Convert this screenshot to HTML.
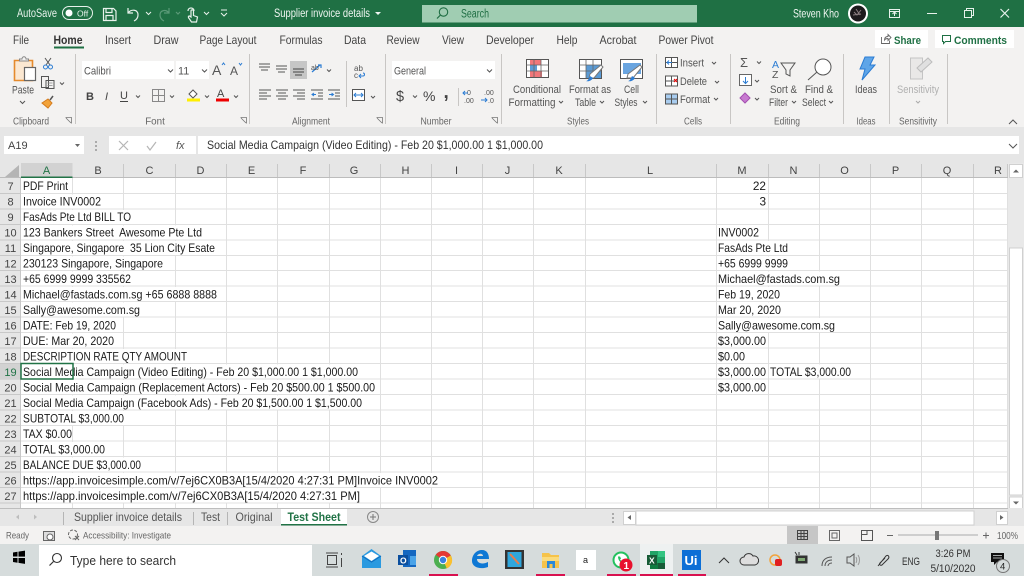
<!DOCTYPE html>
<html><head><meta charset="utf-8"><title>Supplier invoice details - Excel</title>
<style>
html,body{margin:0;padding:0;width:1024px;height:576px;overflow:hidden;background:#fff}
svg{display:block;filter:blur(.3px)}
text{font-family:"Liberation Sans",sans-serif;white-space:pre}
.c{font-size:11.8px;fill:#1a1a1a}
.r{font-size:11px;fill:#444;text-anchor:middle}
.h{font-size:11px;fill:#444;text-anchor:middle}
.rb{font-size:10.8px;fill:#555}
.rm{font-size:10.8px;fill:#555;text-anchor:middle}
.tab{font-size:11.6px;fill:#444;text-anchor:middle}
.lb{font-size:9.8px;fill:#666;text-anchor:middle}
.chev{fill:none;stroke:#555;stroke-width:1}
.ln{fill:none;stroke:#666;stroke-width:1}
</style></head><body>
<svg width="1024" height="576" viewBox="0 0 1024 576" xmlns="http://www.w3.org/2000/svg">
<!-- Title bar -->
<rect width="1024" height="27" fill="#1f7044"/>
<text x="17" y="17" font-size="11.500" fill="#e8f2ec" textLength="40" lengthAdjust="spacingAndGlyphs">AutoSave</text>
<rect x="62.500" y="6.500" width="30" height="13" rx="6.500" fill="none" stroke="#e8f2ec"/>
<circle cx="69" cy="13" r="3.500" fill="#fff"/>
<text x="77" y="16.500" font-size="8.500" fill="#e8f2ec">Off</text>
<g fill="none" stroke="#e8f2ec" stroke-width="1.200">
<path d="M103.500 8.500h10l2.500 2.500v9.500h-12.500z M106 8.500v4h6v-4 M106 20.500v-5h7v5"/>
<path d="M128 8v5h5 M128 13c3-4 10-4 10 2c0 3-2 5-4 6"/>
<path d="M146 12l2.500 2.500l2.500-2.500" stroke-width="1"/>
<path d="M169 8v5h-5 M169 13c-3-4-9-3-9 2c0 3 2 5 4 6 M176 12l2 2l2-2" stroke="#5b9a78"/>
<path d="M191 11v6l-1.500-1c-2 0-1 2 0 3l2 3h5l1-5l-4-1.500v-4.500c0-1.500-2.500-1.500-2.500 0z M188 11c0-4 6-4 6 0"/>
<path d="M204 12l2.500 2.500l2.500-2.500" stroke-width="1"/>
<path d="M221 10h6 M221 13l3 3l3-3" stroke-width="1"/>
</g>
<text x="274" y="17" font-size="11.500" fill="#f0f6f2" textLength="96" lengthAdjust="spacingAndGlyphs">Supplier invoice details</text>
<path d="M375 12h6l-3 3z" fill="#f0f6f2"/>
<rect x="422" y="5" width="275" height="17.500" fill="#a0cdb2"/>
<circle cx="443.500" cy="12" r="4.200" fill="none" stroke="#1f6e43" stroke-width="1.100"/>
<path d="M440.500 15l-3.500 3.500" stroke="#1f6e43" stroke-width="1.200"/>
<text x="461" y="17.500" font-size="11.500" fill="#1f6e43" textLength="28" lengthAdjust="spacingAndGlyphs">Search</text>
<text x="793" y="17.500" font-size="11.500" fill="#f0f6f2" textLength="46" lengthAdjust="spacingAndGlyphs">Steven Kho</text>
<circle cx="858" cy="13.500" r="10" fill="#fff"/><circle cx="858" cy="13.500" r="8" fill="#1c1a1c"/>
<path d="M854 12l3 3l4-5 M856 9l4 6 M853 15l8-1" stroke="#8a7d80" stroke-width="1" fill="none"/>
<g fill="none" stroke="#e8f2ec" stroke-width="1">
<path d="M889.500 9.500h10v8h-10z M889.500 11.500h10 M894.500 16v-3.500 M892.500 14l2-2l2 2"/>
<path d="M927 13.500h10"/>
<path d="M964.500 10.500h7v7h-7z M966.500 10.500v-2h7v7h-2"/>
<path d="M1000.500 9l8.500 8.500 M1009 9l-8.500 8.500" stroke-width="1.200"/>
</g>
<!-- Ribbon -->
<rect y="27" width="1024" height="100" fill="#f3f2f1"/>
<text class="tab" x="21" y="44" textLength="16" lengthAdjust="spacingAndGlyphs">File</text>
<text class="tab" x="68" y="44" font-weight="bold" style="fill:#333" textLength="29" lengthAdjust="spacingAndGlyphs">Home</text>
<rect x="54" y="46.500" width="30" height="2" fill="#1f7044"/>
<text class="tab" x="118" y="44" textLength="26" lengthAdjust="spacingAndGlyphs">Insert</text>
<text class="tab" x="166" y="44" textLength="25" lengthAdjust="spacingAndGlyphs">Draw</text>
<text class="tab" x="228" y="44" textLength="57" lengthAdjust="spacingAndGlyphs">Page Layout</text>
<text class="tab" x="301" y="44" textLength="43" lengthAdjust="spacingAndGlyphs">Formulas</text>
<text class="tab" x="355" y="44" textLength="22" lengthAdjust="spacingAndGlyphs">Data</text>
<text class="tab" x="403" y="44" textLength="33" lengthAdjust="spacingAndGlyphs">Review</text>
<text class="tab" x="453" y="44" textLength="22" lengthAdjust="spacingAndGlyphs">View</text>
<text class="tab" x="510" y="44" textLength="48" lengthAdjust="spacingAndGlyphs">Developer</text>
<text class="tab" x="567" y="44" textLength="21" lengthAdjust="spacingAndGlyphs">Help</text>
<text class="tab" x="618" y="44" textLength="37" lengthAdjust="spacingAndGlyphs">Acrobat</text>
<text class="tab" x="686" y="44" textLength="55" lengthAdjust="spacingAndGlyphs">Power Pivot</text>
<rect x="875" y="30" width="53" height="18" fill="#fff"/>
<path d="M881.500 37v6.500h8v-3 M884.500 40c0-2.500 1.500-3.500 3.500-3.500v-2l3 3l-3 3v-2c-1.500 0-2.500 0-3.500 1.500z" fill="none" stroke="#666" stroke-width=".9"/>
<text x="894" y="44" font-size="11" font-weight="bold" fill="#1f7044" textLength="27" lengthAdjust="spacingAndGlyphs">Share</text>
<rect x="935" y="30" width="79" height="18" fill="#fff"/>
<path d="M942.500 35.500h8v6h-5l-2 2v-2h-1z" fill="none" stroke="#1f7044"/>
<text x="954" y="44" font-size="11" font-weight="bold" fill="#1f7044" textLength="53" lengthAdjust="spacingAndGlyphs">Comments</text>
<!-- Group separators -->
<g stroke="#c8c6c4"><path d="M75.500 54v70 M249.500 54v70 M385.500 54v70 M501.500 54v70 M656.500 54v70 M730.500 54v70 M843.500 54v70 M889.500 54v70 M947.500 54v70"/><path d="M346.500 61v46 M458.500 88v18"/></g>
<!-- group labels -->
<text class="lb" x="31" y="124.500" textLength="36" lengthAdjust="spacingAndGlyphs">Clipboard</text>
<text class="lb" x="155" y="124.500">Font</text>
<text class="lb" x="311" y="124.500" textLength="38" lengthAdjust="spacingAndGlyphs">Alignment</text>
<text class="lb" x="436" y="124.500" textLength="31" lengthAdjust="spacingAndGlyphs">Number</text>
<text class="lb" x="578" y="124.500" textLength="22" lengthAdjust="spacingAndGlyphs">Styles</text>
<text class="lb" x="693" y="124.500" textLength="18" lengthAdjust="spacingAndGlyphs">Cells</text>
<text class="lb" x="787" y="124.500" textLength="26" lengthAdjust="spacingAndGlyphs">Editing</text>
<text class="lb" x="866" y="124.500" textLength="19" lengthAdjust="spacingAndGlyphs">Ideas</text>
<text class="lb" x="918" y="124.500" textLength="38" lengthAdjust="spacingAndGlyphs">Sensitivity</text>
<g fill="none" stroke="#777" stroke-width=".8"><path d="M65.500 117.500h6v6 M66 118l5 5"/><path d="M240.500 117.500h6v6 M241 118l5 5"/><path d="M376.500 117.500h6v6 M377 118l5 5"/><path d="M491.500 117.500h6v6 M492 118l5 5"/></g>
<path class="chev" d="M1009 124l4-4l4 4"/>
<!-- Clipboard -->
<path d="M14.500 60.500h18v20h-18z" fill="#fbe8d2" stroke="#e58a2c" stroke-width="1.600"/>
<path d="M19.500 61v-2h2.500c0-3 4-3 4 0h2.500v2z" fill="#f3f2f1" stroke="#888"/>
<rect x="24.500" y="67.500" width="11" height="13" fill="#fff" stroke="#666" stroke-width="1.200"/>
<text class="rm" x="23" y="93.500" textLength="22" lengthAdjust="spacingAndGlyphs">Paste</text>
<path class="chev" d="M20 101l2.500 2.500l2.500-2.500"/>
<path d="M45 58l5 7 M51 58l-5 7" stroke="#555" fill="none"/>
<circle cx="45.500" cy="67" r="2" fill="none" stroke="#2b7cd3"/><circle cx="50.500" cy="67" r="2" fill="none" stroke="#2b7cd3"/>
<path d="M41.500 76.500h7v11h-7z M46 80.500h8v8h-8z" fill="#f3f2f1" stroke="#555"/>
<path d="M47.500 83h5 M47.500 85.500h5" stroke="#888" stroke-width=".7"/>
<path class="chev" d="M60 82.500l2 2l2-2"/>
<path d="M42 103l6-4l4 4l-4 5z" fill="#f2a33a" stroke="#d47b1c"/>
<path d="M50 100l3-4" stroke="#555" stroke-width="1.500"/>
<!-- Font -->
<rect x="82" y="61" width="92" height="18" fill="#fff"/>
<rect x="176" y="61" width="33" height="18" fill="#fff"/>
<text class="rb" x="84" y="74.500" textLength="27" lengthAdjust="spacingAndGlyphs">Calibri</text>
<text class="rb" x="178" y="74.500">11</text>
<path class="chev" d="M168 69.500l2.500 2.500l2.500-2.500 M202 69.500l2.500 2.500l2.500-2.500"/>
<text x="212" y="75" font-size="14" fill="#555">A</text>
<text x="230" y="75" font-size="12" fill="#555">A</text>
<path d="M222 65l1.500-2l1.500 2" fill="none" stroke="#2b7cd3"/><path d="M239 63l1.500 2l1.500-2" fill="none" stroke="#2b7cd3"/>
<text x="86" y="100" font-size="11" font-weight="bold" fill="#444">B</text>
<text x="105" y="100" font-size="11" font-style="italic" fill="#444" font-family="Liberation Serif">I</text>
<text x="120" y="99" font-size="11" fill="#444">U</text><path d="M120 101.500h8" stroke="#444"/>
<path class="chev" d="M136 95.500l2 2l2-2 M170 95.500l2 2l2-2 M205 95.500l2 2l2-2 M234 95.500l2 2l2-2"/>
<path d="M152.500 89.500h12v12h-12z M158.500 89.500v12 M152.500 95.500h12" fill="none" stroke="#888"/>
<path d="M189 94l4-4l4 4l-4 4z" fill="#fff" stroke="#555"/><rect x="187" y="98.500" width="13" height="3" fill="#ffef00"/>
<text x="217" y="97" font-size="11" fill="#444">A</text><rect x="216" y="98.500" width="13" height="3" fill="#e00"/>
<!-- Alignment -->
<g stroke="#555" fill="none"><path d="M259 64h11 M259 67h11 M261 70h7"/><path d="M276 66h11 M276 69h11 M278 72h7"/></g>
<rect x="290" y="61" width="17" height="18" fill="#c6c6c6"/>
<path d="M293 69h11 M293 72h11 M295 75h7" stroke="#444" fill="none"/>
<path d="M312 72l8-7 M318 65h3v3" stroke="#2b7cd3" fill="none" stroke-width="1.200"/><text x="311" y="70" font-size="7" fill="#555">ab</text>
<path class="chev" d="M327 69.500l2 2l2-2 M371 96l2 2l2-2"/>
<text x="354" y="71" font-size="8" fill="#555">ab</text><text x="354" y="78" font-size="8" fill="#555">c</text>
<path d="M359 76h4c2 0 2-3 0-3 M361 74l-2 2l2 2" stroke="#2b7cd3" fill="none"/>
<g stroke="#555" fill="none"><path d="M259 90h12 M259 93h8 M259 96h12 M259 99h8"/><path d="M276 90h12 M278 93h8 M276 96h12 M278 99h8"/><path d="M293 90h12 M297 93h8 M293 96h12 M297 99h8"/><path d="M311 90h12 M318 93h5 M318 96h5 M311 99h12"/><path d="M328 90h12 M335 93h5 M335 96h5 M328 99h12"/></g>
<path d="M316 94.500h-4 M314 93l-2 1.500l2 1.500 M329 94.500h4 M331.500 93l2 1.500l-2 1.500" stroke="#2b7cd3" fill="none"/>
<rect x="352.500" y="89.500" width="12" height="11" fill="#fff" stroke="#555"/><path d="M354 95h9 M356 93l-2 2l2 2 M361 93l2 2l-2 2" stroke="#2b7cd3" fill="none"/>
<!-- Number -->
<rect x="392" y="61" width="103" height="18" fill="#fff"/>
<text class="rb" x="394" y="74.500" textLength="32" lengthAdjust="spacingAndGlyphs">General</text>
<path class="chev" d="M487 69.500l2.500 2.500l2.500-2.500 M413 95.500l2 2l2-2"/>
<text x="396" y="101" font-size="14.500" fill="#444">$</text>
<text x="423" y="101" font-size="14" fill="#444">%</text>
<text x="443.500" y="98" font-size="19" font-weight="bold" fill="#444">,</text>
<text x="467" y="95" font-size="7" fill="#555">0</text><text x="464" y="103" font-size="7" fill="#555">.00</text>
<path d="M468 93h-5 M465 91l-2 2l2 2" stroke="#2b7cd3" fill="none"/>
<text x="484" y="95" font-size="7" fill="#555">.00</text><text x="488" y="103" font-size="7" fill="#555">.0</text>
<path d="M481 100h6 M485 98l2 2l-2 2" stroke="#2b7cd3" fill="none"/>
<!-- Styles -->
<rect x="526.500" y="59.500" width="22" height="18" fill="#fff" stroke="#555"/>
<path d="M530 60h11v5h-11z M530 71h12v6h-12z" fill="#f1777a"/><rect x="530" y="65" width="7" height="6" fill="#5b9bd5"/>
<path d="M526.500 65h22 M526.500 71h22 M534 59.500v18 M541 59.500v18" stroke="#666" stroke-width=".8" fill="none"/>
<text class="rm" x="537" y="93" textLength="48" lengthAdjust="spacingAndGlyphs">Conditional</text>
<text class="rm" x="532" y="106" textLength="47" lengthAdjust="spacingAndGlyphs">Formatting</text>
<path class="chev" d="M559 101l2 2l2-2"/>
<rect x="579.500" y="59.500" width="22" height="19" fill="#fff" stroke="#555"/>
<rect x="586" y="65" width="15" height="13" fill="#5b9bd5"/>
<path d="M579.500 65h22 M579.500 71h22 M586 59.500v19 M593 59.500v19" stroke="#666" stroke-width=".8" fill="none"/>
<path d="M589 78l1-4l11-9l2 2l-9 11z" fill="#fff" stroke="#777"/><path d="M586 81c2 0 3-3 4-5l3 2c-1 2-4 4-7 3z" fill="#2b7cd3"/>
<text class="rm" x="590" y="93" textLength="42" lengthAdjust="spacingAndGlyphs">Format as</text>
<text class="rm" x="585.500" y="106" textLength="21" lengthAdjust="spacingAndGlyphs">Table</text>
<path class="chev" d="M600 101l2 2l2-2"/>
<rect x="620.500" y="59.500" width="22" height="19" fill="#fff" stroke="#555"/>
<rect x="623" y="63" width="18" height="11" fill="#6aa5e0"/>
<path d="M627 78l1-4l12-9l2 2l-9 11z" fill="#fff" stroke="#777"/><path d="M628 81c2 0 3-3 4-5l3 2c-1 2-4 4-7 3z" fill="#2b7cd3"/>
<text class="rm" x="631.500" y="93" textLength="15" lengthAdjust="spacingAndGlyphs">Cell</text>
<text class="rm" x="626" y="106" textLength="23" lengthAdjust="spacingAndGlyphs">Styles</text>
<path class="chev" d="M643 101l2 2l2-2"/>
<!-- Cells -->
<path d="M665.500 57.500h12v10h-12z M665.500 62.500h12 M671.500 57.500v10" fill="#fff" stroke="#555"/><path d="M667 62.500h5 M669 60.500l-2 2l2 2" stroke="#2b7cd3" fill="none"/>
<text class="rb" x="680" y="66.500" textLength="24" lengthAdjust="spacingAndGlyphs">Insert</text>
<path d="M665.500 76h12v10h-12z M665.500 81h12 M671.500 76v10" fill="#fff" stroke="#555"/><path d="M674 79l3 3 M677 79l-3 3" stroke="#e00" fill="none"/>
<text class="rb" x="680" y="85" textLength="27" lengthAdjust="spacingAndGlyphs">Delete</text>
<path d="M665.500 94h12v10h-12z" fill="#a9cdf0" stroke="#555"/><path d="M665.500 99h12 M671.500 94v10" stroke="#555" fill="none"/>
<text class="rb" x="680" y="103" textLength="30" lengthAdjust="spacingAndGlyphs">Format</text>
<path class="chev" d="M712 62l2 2l2-2 M715 81l2 2l2-2 M714 98l2 2l2-2"/>
<!-- Editing -->
<text x="740" y="67" font-size="13" fill="#555">Σ</text>
<path class="chev" d="M757 61.500l2 2l2-2 M755 80l2 2l2-2 M755 98l2 2l2-2"/>
<rect x="739.500" y="74.500" width="12" height="11" fill="#fff" stroke="#666"/><path d="M745.500 77v6 M743 81l2.500 2.500l2.500-2.500" stroke="#2b7cd3" fill="none"/>
<path d="M740 98l5-5l5 5l-5 5z" fill="#c77ad0" stroke="#a34fb0"/>
<text x="772" y="68" font-size="10.500" fill="#2b7cd3">A</text><text x="772" y="78" font-size="10.500" fill="#555">Z</text>
<path d="M781 63h14l-5 7v6l-4-2v-4z" fill="none" stroke="#555"/>
<text class="rm" x="783.500" y="93" textLength="27" lengthAdjust="spacingAndGlyphs">Sort &amp;</text>
<text class="rm" x="778.500" y="106" textLength="19" lengthAdjust="spacingAndGlyphs">Filter</text>
<path class="chev" d="M792 101l2 2l2-2"/>
<circle cx="823" cy="67" r="8" fill="#fff" stroke="#555"/><path d="M817 72l-9 8" stroke="#555" fill="none"/>
<text class="rm" x="819" y="93" textLength="28" lengthAdjust="spacingAndGlyphs">Find &amp;</text>
<text class="rm" x="814" y="106" textLength="24" lengthAdjust="spacingAndGlyphs">Select</text>
<path class="chev" d="M829 101l2 2l2-2"/>
<!-- Ideas -->
<path d="M865 57h9l-4 8h5l-13 15l3-11h-5z" fill="#5ea5e8" stroke="#2b7cd3"/>
<text class="rm" x="866" y="93" textLength="22" lengthAdjust="spacingAndGlyphs">Ideas</text>
<!-- Sensitivity -->
<path d="M910.500 58h12v21h-12z" fill="#e9e8e7" stroke="#c4c4c4"/>
<path d="M917 68l11-10l4 4l-11 10z" fill="#e0e0e0" stroke="#bdbdbd"/>
<text class="rm" x="918" y="93" textLength="42" lengthAdjust="spacingAndGlyphs" style="fill:#b0b0b0">Sensitivity</text>
<path d="M916 101l2 2l2-2" fill="none" stroke="#aaa"/>
<!-- Formula bar -->
<rect y="127" width="1024" height="36" fill="#e6e6e6"/>
<rect x="4" y="136" width="80" height="18" fill="#fff"/>
<text x="8" y="149" font-size="11" fill="#444">A19</text>
<path d="M75 144h5l-2.500 3z" fill="#666"/>
<g fill="#aaa"><rect x="95" y="141" width="2" height="2"/><rect x="95" y="145" width="2" height="2"/><rect x="95" y="149" width="2" height="2"/></g>
<rect x="109" y="136" width="87" height="18" fill="#fff"/>
<path d="M119 141l9 9 M128 141l-9 9 M147 146l3 4l6-8" stroke="#b5b5b5" fill="none" stroke-width="1.200"/>
<text x="176" y="149" font-size="11" font-style="italic" font-family="Liberation Serif" fill="#555">fx</text>
<rect x="198" y="136" width="821" height="18" fill="#fff"/>
<text x="207" y="149" font-size="11.800" fill="#333" textLength="336" lengthAdjust="spacingAndGlyphs">Social Media Campaign (Video Editing) - Feb 20 $1,000.00 1 $1,000.00</text>
<path class="chev" d="M1009 144l4 4l4-4"/>
<!-- Grid -->
<rect x="0" y="163" width="1024" height="345" fill="#fff"/>
<rect x="0" y="163" width="1008" height="15" fill="#e6e6e6"/>
<rect x="0" y="178" width="21" height="330" fill="#e6e6e6"/>
<path d="M20 165v12h-14z" fill="#b5b5b5" transform="translate(-1 0)"/>
<g stroke="#e0e0e0" fill="none">
<path d="M72.500 178v330 M123.500 178v330 M175.500 178v330 M226.500 178v330 M277.500 178v330 M329.500 178v330 M380.500 178v330 M431.500 178v330 M482.500 178v330 M533.500 178v330 M585.500 178v330 M716.500 178v330 M768.500 178v330 M819.500 178v330 M870.500 178v330 M921.500 178v330 M973.500 178v330 M1007.500 178v330"/>
<path d="M21 193.500h987 M21 209h987 M21 224.500h987 M21 240h987 M21 255.500h987 M21 270.500h987 M21 286h987 M21 301.500h987 M21 317h987 M21 332.500h987 M21 348h987 M21 363.500h987 M21 379h987 M21 394.500h987 M21 410h987 M21 425.500h987 M21 441h987 M21 456.500h987 M21 472h987 M21 487.500h987 M21 503h987"/>
</g>
<g stroke="#c8c8c8" fill="none"><path d="M123.500 164v14 M175.500 164v14 M226.500 164v14 M277.500 164v14 M329.500 164v14 M380.500 164v14 M431.500 164v14 M482.500 164v14 M533.500 164v14 M585.500 164v14 M716.500 164v14 M768.500 164v14 M819.500 164v14 M870.500 164v14 M921.500 164v14 M973.500 164v14 M1007.500 164v14"/>
<path d="M20.500 178v330 M0 193.500h21 M0 209h21 M0 224.500h21 M0 240h21 M0 255.500h21 M0 270.500h21 M0 286h21 M0 301.500h21 M0 317h21 M0 332.500h21 M0 348h21 M0 363.500h21 M0 379h21 M0 394.500h21 M0 410h21 M0 425.500h21 M0 441h21 M0 456.500h21 M0 472h21 M0 487.500h21 M0 503h21"/></g>
<rect x="21" y="163" width="51.500" height="14" fill="#d2d2d2"/>
<path d="M0 178h1008" stroke="#bcbcbc" fill="none" transform="translate(0 -.5)"/>
<rect x="21" y="176.500" width="51.500" height="1.500" fill="#217346"/>
<rect x="0" y="364" width="20" height="15" fill="#d2d2d2"/>
<!-- White masks for overflow -->
<g fill="#fff">
<rect x="22" y="194.500" width="100.500" height="14"/><rect x="22" y="210" width="152" height="14"/><rect x="22" y="225.500" width="203" height="14"/><rect x="22" y="241" width="203" height="14"/><rect x="22" y="256.500" width="152" height="13.500"/><rect x="22" y="271.500" width="152" height="14"/><rect x="22" y="287" width="203" height="14"/><rect x="22" y="302.500" width="152" height="14"/><rect x="22" y="318" width="100.500" height="14"/><rect x="22" y="333.500" width="100.500" height="14"/><rect x="22" y="349" width="203" height="14"/><rect x="22" y="364.500" width="357" height="14"/><rect x="22" y="380" width="357" height="14"/><rect x="22" y="395.500" width="357" height="14"/><rect x="22" y="411" width="152" height="14"/><rect x="22" y="442" width="100.500" height="14"/><rect x="22" y="457.500" width="152" height="14"/><rect x="22" y="473" width="459" height="14"/><rect x="22" y="488.500" width="357" height="14"/>
<rect x="717" y="241" width="101" height="14"/><rect x="717" y="256.500" width="101" height="13.500"/><rect x="717" y="271.500" width="152" height="14"/><rect x="717" y="287" width="101" height="14"/><rect x="717" y="302.500" width="101" height="14"/><rect x="717" y="318" width="152" height="14"/><rect x="769" y="364.500" width="100" height="14"/>
</g>
<!-- Column headers -->
<text class="h" x="46.500" y="174" style="fill:#217346">A</text>
<text class="h" x="98" y="174">B</text><text class="h" x="149.500" y="174">C</text><text class="h" x="200.500" y="174">D</text><text class="h" x="251.500" y="174">E</text><text class="h" x="303" y="174">F</text><text class="h" x="354" y="174">G</text><text class="h" x="405.500" y="174">H</text><text class="h" x="456.500" y="174">I</text><text class="h" x="507.500" y="174">J</text><text class="h" x="559" y="174">K</text><text class="h" x="650" y="174">L</text><text class="h" x="742" y="174">M</text><text class="h" x="793.500" y="174">N</text><text class="h" x="844.500" y="174">O</text><text class="h" x="895.500" y="174">P</text><text class="h" x="947" y="174">Q</text><text class="h" x="998" y="174">R</text>
<!-- Row headers -->
<text class="r" x="10.500" y="190">7</text><text class="r" x="10.500" y="205.500">8</text><text class="r" x="10.500" y="221">9</text><text class="r" x="10.500" y="236.500">10</text><text class="r" x="10.500" y="252">11</text><text class="r" x="10.500" y="267.500">12</text><text class="r" x="10.500" y="283">13</text><text class="r" x="10.500" y="298.500">14</text><text class="r" x="10.500" y="314">15</text><text class="r" x="10.500" y="329.500">16</text><text class="r" x="10.500" y="345">17</text><text class="r" x="10.500" y="360.500">18</text><text class="r" x="10.500" y="376" style="fill:#217346">19</text><text class="r" x="10.500" y="391.500">20</text><text class="r" x="10.500" y="407">21</text><text class="r" x="10.500" y="422.500">22</text><text class="r" x="10.500" y="438">23</text><text class="r" x="10.500" y="453.500">24</text><text class="r" x="10.500" y="469">25</text><text class="r" x="10.500" y="484.500">26</text><text class="r" x="10.500" y="500">27</text>
<!-- Cell text col A -->
<text class="c" x="23" y="190" textLength="45" lengthAdjust="spacingAndGlyphs">PDF Print</text>
<text class="c" x="23" y="205.500" textLength="78" lengthAdjust="spacingAndGlyphs">Invoice INV0002</text>
<text class="c" x="23" y="221" textLength="108" lengthAdjust="spacingAndGlyphs">FasAds Pte Ltd BILL TO</text>
<text class="c" x="23" y="236.500" textLength="179" lengthAdjust="spacingAndGlyphs">123 Bankers Street  Awesome Pte Ltd</text>
<text class="c" x="23" y="252" textLength="192" lengthAdjust="spacingAndGlyphs">Singapore, Singapore  35 Lion City Esate</text>
<text class="c" x="23" y="267.500" textLength="140" lengthAdjust="spacingAndGlyphs">230123 Singapore, Singapore</text>
<text class="c" x="23" y="283" textLength="108" lengthAdjust="spacingAndGlyphs">+65 6999 9999 335562</text>
<text class="c" x="23" y="298.500" textLength="194" lengthAdjust="spacingAndGlyphs">Michael@fastads.com.sg +65 6888 8888</text>
<text class="c" x="23" y="314" textLength="117" lengthAdjust="spacingAndGlyphs">Sally@awesome.com.sg</text>
<text class="c" x="23" y="329.500" textLength="93" lengthAdjust="spacingAndGlyphs">DATE: Feb 19, 2020</text>
<text class="c" x="23" y="345" textLength="91" lengthAdjust="spacingAndGlyphs">DUE: Mar 20, 2020</text>
<text class="c" x="23" y="360.500" textLength="164" lengthAdjust="spacingAndGlyphs">DESCRIPTION RATE QTY AMOUNT</text>
<text class="c" x="23" y="376" textLength="335" lengthAdjust="spacingAndGlyphs">Social Media Campaign (Video Editing) - Feb 20 $1,000.00 1 $1,000.00</text>
<text class="c" x="23" y="391.500" textLength="352" lengthAdjust="spacingAndGlyphs">Social Media Campaign (Replacement Actors) - Feb 20 $500.00 1 $500.00</text>
<text class="c" x="23" y="407" textLength="339" lengthAdjust="spacingAndGlyphs">Social Media Campaign (Facebook Ads) - Feb 20 $1,500.00 1 $1,500.00</text>
<text class="c" x="23" y="422.500" textLength="101" lengthAdjust="spacingAndGlyphs">SUBTOTAL $3,000.00</text>
<text class="c" x="23" y="438" textLength="49" lengthAdjust="spacingAndGlyphs">TAX $0.00</text>
<text class="c" x="23" y="453.500" textLength="82" lengthAdjust="spacingAndGlyphs">TOTAL $3,000.00</text>
<text class="c" x="23" y="469" textLength="118" lengthAdjust="spacingAndGlyphs">BALANCE DUE $3,000.00</text>
<text class="c" x="23" y="484.500" textLength="415" lengthAdjust="spacingAndGlyphs">https://app.invoicesimple.com/v/7ej6CX0B3A[15/4/2020 4:27:31 PM]Invoice INV0002</text>
<text class="c" x="23" y="500" textLength="337" lengthAdjust="spacingAndGlyphs">https://app.invoicesimple.com/v/7ej6CX0B3A[15/4/2020 4:27:31 PM]</text>
<!-- col M -->
<text class="c" x="766" y="190" text-anchor="end">22</text>
<text class="c" x="766" y="205.500" text-anchor="end">3</text>
<text class="c" x="718" y="236.500" textLength="41" lengthAdjust="spacingAndGlyphs">INV0002</text>
<text class="c" x="718" y="252" textLength="70" lengthAdjust="spacingAndGlyphs">FasAds Pte Ltd</text>
<text class="c" x="718" y="267.500" textLength="70" lengthAdjust="spacingAndGlyphs">+65 6999 9999</text>
<text class="c" x="718" y="283" textLength="122" lengthAdjust="spacingAndGlyphs">Michael@fastads.com.sg</text>
<text class="c" x="718" y="298.500" textLength="62" lengthAdjust="spacingAndGlyphs">Feb 19, 2020</text>
<text class="c" x="718" y="314" textLength="63" lengthAdjust="spacingAndGlyphs">Mar 20, 2020</text>
<text class="c" x="718" y="329.500" textLength="117" lengthAdjust="spacingAndGlyphs">Sally@awesome.com.sg</text>
<text class="c" x="718" y="345" textLength="48" lengthAdjust="spacingAndGlyphs">$3,000.00</text>
<text class="c" x="718" y="360.500" textLength="27" lengthAdjust="spacingAndGlyphs">$0.00</text>
<text class="c" x="718" y="376" textLength="48" lengthAdjust="spacingAndGlyphs">$3,000.00</text>
<text class="c" x="770" y="376" textLength="81" lengthAdjust="spacingAndGlyphs">TOTAL $3,000.00</text>
<text class="c" x="718" y="391.500" textLength="48" lengthAdjust="spacingAndGlyphs">$3,000.00</text>
<!-- Selection -->
<rect x="21" y="363.500" width="52" height="15.500" fill="none" stroke="#217346" stroke-width="1.500"/>
<!-- Vertical scrollbar -->
<rect x="1008" y="163" width="16" height="345" fill="#e9e9e9"/>
<rect x="1009.500" y="164.500" width="13" height="13" fill="#fff" stroke="#d0d0d0"/>
<path d="M1013 172.500h6l-3-3z" fill="#666"/>
<rect x="1009.500" y="248" width="13" height="247" fill="#fff" stroke="#d0d0d0"/>
<rect x="1009.500" y="497" width="13" height="12" fill="#fff" stroke="#d0d0d0"/>
<path d="M1013 501.500h6l-3 3z" fill="#666"/>
<!-- Tab bar -->
<rect y="508" width="1024" height="18" fill="#e6e6e6"/>
<path d="M0 508.500h1008" stroke="#bdbdbd"/>
<path d="M19 514.500v5l-3-2.500z M34 514.500v5l3-2.500z" fill="#bdbdbd"/>
<path d="M63.500 512v13 M193.500 512v13 M227.500 512v13" stroke="#b5b5b5"/>
<text class="tab" x="128" y="521" textLength="108" lengthAdjust="spacingAndGlyphs" style="fill:#555">Supplier invoice details</text>
<text class="tab" x="210.500" y="521" textLength="19" lengthAdjust="spacingAndGlyphs" style="fill:#555">Test</text>
<text class="tab" x="254" y="521" textLength="37" lengthAdjust="spacingAndGlyphs" style="fill:#555">Original</text>
<rect x="281" y="509" width="66" height="16" fill="#fff"/>
<rect x="281" y="524" width="66" height="1.500" fill="#217346"/>
<text class="tab" x="314" y="521" font-weight="bold" textLength="53" lengthAdjust="spacingAndGlyphs" style="fill:#217346">Test Sheet</text>
<circle cx="373" cy="517" r="5.500" fill="none" stroke="#888"/><path d="M370 517h6 M373 514v6" stroke="#777"/>
<g fill="#aaa"><rect x="612" y="513" width="2" height="2"/><rect x="612" y="517" width="2" height="2"/><rect x="612" y="521" width="2" height="2"/></g>
<rect x="623.500" y="511.500" width="12" height="13" fill="#fff" stroke="#d0d0d0"/><path d="M631 515v5l-3.500-2.500z" fill="#666"/>
<rect x="636" y="511" width="338" height="14" fill="#fff" stroke="#d0d0d0"/>
<rect x="996.500" y="511.500" width="11" height="13" fill="#fff" stroke="#d0d0d0"/><path d="M1000 515v5l3.500-2.500z" fill="#666"/>
<!-- Status bar -->
<rect y="526" width="1024" height="18" fill="#f3f2f1"/>
<text x="6" y="538.500" font-size="9.500" fill="#666" textLength="23" lengthAdjust="spacingAndGlyphs">Ready</text>
<path d="M43.500 531.500h11v9h-11z" fill="#ddd" stroke="#666"/><circle cx="50" cy="537" r="3" fill="#fff" stroke="#666"/>
<circle cx="73" cy="534.500" r="4.500" fill="none" stroke="#666" stroke-dasharray="3 1.500"/><path d="M75 536l4 4 M79 536l-4 4" stroke="#666" fill="none"/>
<text x="83" y="538.500" font-size="9.500" fill="#666" textLength="88" lengthAdjust="spacingAndGlyphs">Accessibility: Investigate</text>
<rect x="787" y="526" width="31" height="18" fill="#c6c6c6"/>
<path d="M797.500 530.500h10v9h-10z M797.500 533.500h10 M797.500 536.500h10 M801 530.500v9 M804 530.500v9" fill="none" stroke="#444"/>
<path d="M829.500 530.500h10v10h-10z M832 533h5v5h-5z" fill="none" stroke="#666"/>
<path d="M861.500 530.500h11v10h-11z M867 530.500v4h-5.500" fill="none" stroke="#555"/>
<path d="M887 535.500h6 M983 535.500h6 M986 532.500v6" stroke="#666"/>
<path d="M898 535h80" stroke="#aaa"/><rect x="935" y="531" width="4" height="9" fill="#777"/>
<text x="997" y="539" font-size="10" fill="#666" textLength="21" lengthAdjust="spacingAndGlyphs">100%</text>
<!-- Taskbar -->
<rect y="544" width="1024" height="32" fill="#d6dcdc"/>
<path d="M13 552.500l4.500-.7v4.700h-4.500z M18.500 551.600l6.500-1v6h-6.500z M13 558h4.500v4.700l-4.500-.7z M18.500 558h6.500v5.900l-6.500-1z" fill="#000"/>
<rect x="39" y="545" width="273" height="31" fill="#fff"/>
<circle cx="57" cy="558" r="4.500" fill="none" stroke="#333" stroke-width="1.100"/><path d="M53.500 561.500l-4 4" stroke="#333" stroke-width="1.200"/>
<text x="70" y="565" font-size="12.500" fill="#333" textLength="106" lengthAdjust="spacingAndGlyphs">Type here to search</text>
<path d="M327.500 555.500h9v9h-9z M326 553h12 M326 567h12 M341.500 553v2 M341.500 558v9" fill="none" stroke="#444"/>
<!-- Mail -->
<path d="M362 556l9.500-7l9.500 7v12h-19z" fill="#2b9ae0"/><path d="M364 556l7.500-4.500l7.500 4.500l-7.500 5z" fill="#fff"/><path d="M362 556l9.500 6l9.500-6" fill="none" stroke="#0f6cbd"/>
<!-- Outlook -->
<rect x="403" y="550" width="13" height="17" fill="#1467c0"/><rect x="398" y="555" width="10" height="10" fill="#0b4f9e"/>
<text x="400" y="563.500" font-size="8.500" font-weight="bold" fill="#fff">O</text><rect x="410" y="556" width="6" height="9" fill="#4aa3e8"/>
<!-- Chrome -->
<circle cx="443" cy="560" r="9" fill="#4caf50"/><path d="M443 560l7.800-4.500a9 9 0 0 0-15.100-.7z" fill="#e53935"/><path d="M443 560l7.800-4.500a9 9 0 0 1-4 13z" fill="#fbc02d"/><circle cx="443" cy="560" r="4.200" fill="#fff"/><circle cx="443" cy="560" r="3.200" fill="#3b82e0"/>
<!-- Edge -->
<path d="M472 561c0-7 5-11 10-11c5 0 7 4 7 9h-12c0 4 5 6 11 3v5c-8 3-16 0-16-6z M477 556h6c0-3-5-3-6 0z" fill="#0f78d4" fill-rule="evenodd"/>
<!-- Snip -->
<rect x="505" y="550" width="19" height="19" fill="#333"/><rect x="507.500" y="552" width="14" height="15" fill="#2fa6dc"/><path d="M510 554l9 10" stroke="#e87b4a" stroke-width="2"/>
<!-- Folder -->
<path d="M542 553h7l2 2h8v13h-17z" fill="#f6c34a"/><rect x="542" y="557" width="17" height="4" fill="#fbdb7c"/><rect x="547" y="561" width="8" height="7" fill="#2b88d8"/><rect x="549.500" y="564" width="3" height="4" fill="#f6c34a"/>
<!-- Amazon -->
<rect x="576" y="550" width="20" height="20" fill="#fff"/><text x="583" y="563" font-size="9" fill="#222">a</text>
<!-- WhatsApp -->
<circle cx="621" cy="560" r="7.500" fill="#fff" stroke="#25c15f" stroke-width="2"/><path d="M618 556.500c0 4 3 7 6 7l1-2l-2-1l-1 1l-2-2l1-1l-1-2z" fill="#25c15f"/>
<circle cx="626" cy="565" r="6.500" fill="#e8112d"/><text x="623.500" y="569" font-size="10" font-weight="bold" fill="#fff">1</text>
<!-- Excel -->
<rect x="640" y="544" width="33" height="32" fill="#eef1f1"/>
<rect x="650" y="551" width="15" height="18" fill="#21a366"/><rect x="658" y="551" width="7" height="6" fill="#33c481"/><rect x="658" y="563" width="7" height="6" fill="#185c37"/><rect x="650" y="563" width="8" height="6" fill="#107c41"/>
<rect x="647" y="555" width="10" height="10" fill="#185c37"/><text x="649" y="563.500" font-size="8.500" font-weight="bold" fill="#fff">X</text>
<!-- Ui -->
<rect x="682" y="550" width="19" height="20" fill="#0d6fd6"/><text x="684.500" y="565" font-size="13" font-weight="bold" fill="#fff">Ui</text>
<!-- running lines -->
<g fill="#d8114f"><rect x="429" y="574" width="29" height="2"/><rect x="536" y="574" width="29" height="2"/><rect x="607" y="574" width="29" height="2"/><rect x="640" y="574" width="33" height="2"/><rect x="678" y="574" width="28" height="2"/></g>
<!-- Tray -->
<path d="M719 563l5-5l5 5" fill="none" stroke="#333"/>
<path d="M744 565a4 4 0 0 1 0-8a5 5 0 0 1 9-1a4.500 4.500 0 0 1 2 9z" fill="#ddd" stroke="#333"/>
<circle cx="775" cy="560" r="5" fill="none" stroke="#f2a33a" stroke-width="1.500"/><rect x="775" y="559" width="7" height="7" rx="2" fill="#e02020"/>
<path d="M796 556h11v7h-11z" fill="#333" stroke="#333"/><path d="M798 558h7v3h-7z" fill="#7fa874"/><path d="M795 552l2 3 M799 552v3" stroke="#333"/>
<path d="M822 566c0-6 4-9 10-9 M825 566c0-4 3-6 7-6 M828 566c0-2 2-3 4-3" fill="none" stroke="#555"/>
<path d="M847 557h3l4-3v12l-4-3h-3z" fill="none" stroke="#555"/><path d="M856 557c1 2 1 4 0 6 M858 555c2 3 2 7 0 10" fill="none" stroke="#999"/>
<path d="M878 566l8-10c2-2 4 1 2 3l-6 6c-2 1-3-1-2-2l5-5" fill="none" stroke="#333"/>
<text x="902" y="565" font-size="11" fill="#333" textLength="18" lengthAdjust="spacingAndGlyphs">ENG</text>
<text x="953" y="557" font-size="11" text-anchor="middle" fill="#333" textLength="35" lengthAdjust="spacingAndGlyphs">3:26 PM</text>
<text x="953" y="572" font-size="11" text-anchor="middle" fill="#333" textLength="45" lengthAdjust="spacingAndGlyphs">5/10/2020</text>
<path d="M991 553h13v9h-7l-3 3v-3h-3z" fill="#111"/><path d="M993 555.500h9 M993 558h9" stroke="#d6dcdc" stroke-width=".8"/>
<circle cx="1003" cy="566" r="6.500" fill="#d6dcdc" stroke="#777"/><text x="1000" y="569.500" font-size="9.500" fill="#222">4</text>
</svg>
</body></html>
